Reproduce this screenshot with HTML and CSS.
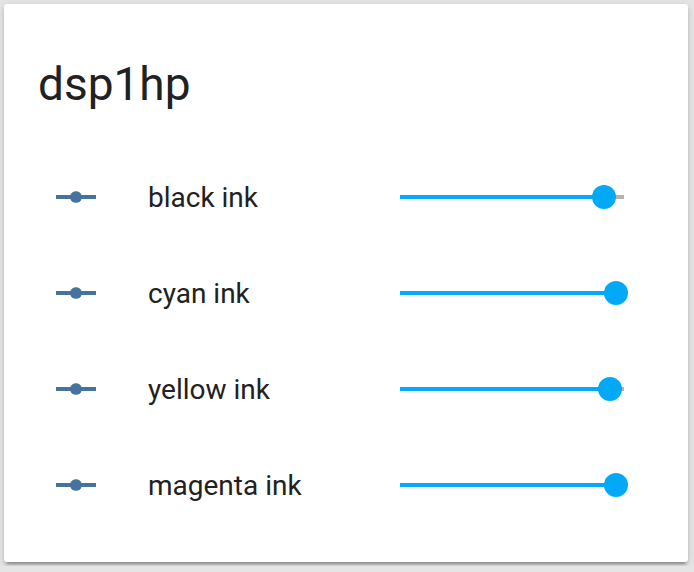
FILE: index.html
```html
<!DOCTYPE html>
<html>
<head>
<meta charset="utf-8">
<link rel="stylesheet" href="styles.css">
</head>
<body>
<div class="card">
  <div class="card-header">dsp1hp</div>
  <div class="rows">
    <div class="row">
      <svg class="icon" viewBox="2 7 20 10"><path d="M2 11H9.2A3 3 0 0 1 14.8 11H22V13H14.8A3 3 0 0 1 9.2 13H2Z"/></svg>
      <div class="label">black ink</div>
      <div class="slider" style="--v:204px"><div class="track"></div><div class="knob"></div></div>
    </div>
    <div class="row">
      <svg class="icon" viewBox="2 7 20 10"><path d="M2 11H9.2A3 3 0 0 1 14.8 11H22V13H14.8A3 3 0 0 1 9.2 13H2Z"/></svg>
      <div class="label">cyan ink</div>
      <div class="slider" style="--v:216px"><div class="track"></div><div class="knob"></div></div>
    </div>
    <div class="row">
      <svg class="icon" viewBox="2 7 20 10"><path d="M2 11H9.2A3 3 0 0 1 14.8 11H22V13H14.8A3 3 0 0 1 9.2 13H2Z"/></svg>
      <div class="label">yellow ink</div>
      <div class="slider" style="--v:210px"><div class="track"></div><div class="knob"></div></div>
    </div>
    <div class="row">
      <svg class="icon" viewBox="2 7 20 10"><path d="M2 11H9.2A3 3 0 0 1 14.8 11H22V13H14.8A3 3 0 0 1 9.2 13H2Z"/></svg>
      <div class="label">magenta ink</div>
      <div class="slider" style="--v:216px"><div class="track"></div><div class="knob"></div></div>
    </div>
  </div>
</div>
</body>
</html>
```
FILE: styles.css
```css
html, body {
  margin: 0;
  padding: 0;
  background: #e5e5e5;
}
body {
  font-family: Roboto, "Noto Sans", sans-serif;
  color: #212121;
}
.card {
  margin: 4px;
  width: 684px;
  height: 558px;
  box-sizing: border-box;
  background: #fff;
  border-radius: 3px;
  box-shadow: 0 3px 3px 0 rgba(0,0,0,0.14), 0 2px 8px 0 rgba(0,0,0,0.12), 0 5px 2px -3px rgba(0,0,0,0.2);
}
.card-header {
  font-size: 46px;
  line-height: 54px;
  padding: 53px 0 0 34px;
  height: 92px;
}
.rows {
  display: flex;
  flex-direction: column;
}
.row {
  height: 96px;
  display: flex;
  align-items: center;
  padding-left: 52px;
}
.icon {
  width: 40px;
  height: 20px;
  fill: #44739e;
  flex: none;
}
.label {
  font-size: 28px;
  margin-left: 52px;
  width: 252px;
  flex: none;
}
.slider {
  position: relative;
  width: 224px;
  height: 24px;
  display: flex;
  align-items: center;
}
.track {
  width: 100%;
  height: 4px;
  background: linear-gradient(to right, #03a9f4 var(--v), #b3b3b3 var(--v));
}
.knob {
  position: absolute;
  top: 0;
  left: calc(var(--v) - 12px);
  width: 24px;
  height: 24px;
  border-radius: 50%;
  background: #03a9f4;
}
```
